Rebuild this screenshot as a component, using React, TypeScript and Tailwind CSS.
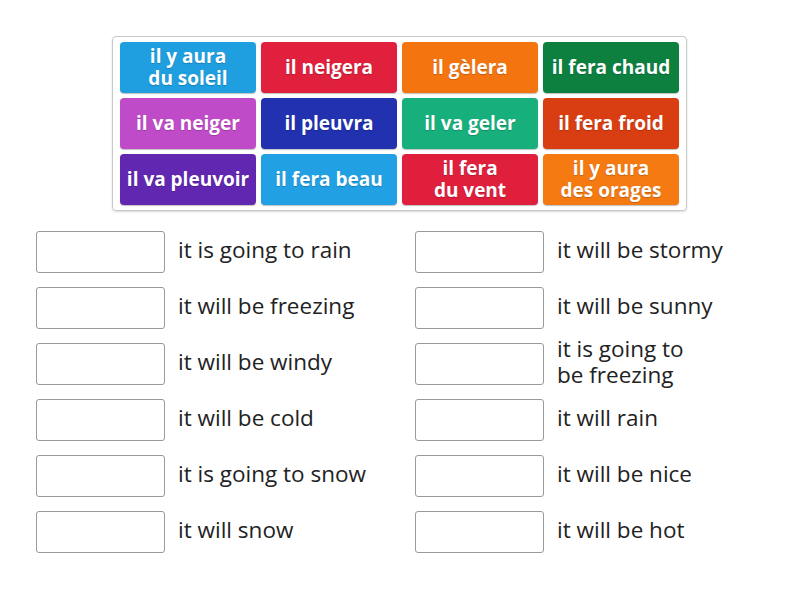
import React from "react";

type Tile = { lines: string[]; bg: string };

const tiles: Tile[] = [
  { lines: ["il y aura", "du soleil"], bg: "bg-[#1f9fe0]" },
  { lines: ["il neigera"], bg: "bg-[#e0203c]" },
  { lines: ["il gèlera"], bg: "bg-[#f47510]" },
  { lines: ["il fera chaud"], bg: "bg-[#0d8040]" },
  { lines: ["il va neiger"], bg: "bg-[#c04bc9]" },
  { lines: ["il pleuvra"], bg: "bg-[#2131b0]" },
  { lines: ["il va geler"], bg: "bg-[#17b07d]" },
  { lines: ["il fera froid"], bg: "bg-[#d93d12]" },
  { lines: ["il va pleuvoir"], bg: "bg-[#6127b1]" },
  { lines: ["il fera beau"], bg: "bg-[#21a0e3]" },
  { lines: ["il fera", "du vent"], bg: "bg-[#e01f3d]" },
  { lines: ["il y aura", "des orages"], bg: "bg-[#f57a12]" },
];

const left: string[][] = [
  ["it is going to rain"],
  ["it will be freezing"],
  ["it will be windy"],
  ["it will be cold"],
  ["it is going to snow"],
  ["it will snow"],
];

const right: string[][] = [
  ["it will be stormy"],
  ["it will be sunny"],
  ["it is going to", "be freezing"],
  ["it will rain"],
  ["it will be nice"],
  ["it will be hot"],
];

const Row = ({ lines }: { lines: string[] }) => (
  <div className="flex items-center h-[42px]">
    <div className="w-[129px] h-[42px] shrink-0 border border-[#9a9a9a] rounded-[3px] bg-white" />
    <div className="ml-[13px] pb-[5px] text-[22.5px] leading-[26px] text-[#222]">
      {lines.map((l, i) => (
        <div key={i} className="whitespace-nowrap">{l}</div>
      ))}
    </div>
  </div>
);

export default function App() {
  return (
    <div className="w-[800px] h-[600px] bg-white" style={{ fontFamily: '"Open Sans", sans-serif' }}>
      <div className="pt-[36px]">
        <div className="ml-[112px] w-[575px] border border-[#c8c8c8] rounded-[4px] pl-[7px] pr-[5px] pt-[5px] pb-[5px] shadow-[0_1px_2px_rgba(0,0,0,0.15)]">
          <div className="grid grid-cols-[repeat(4,136px)] gap-[5px]">
            {tiles.map((t, i) => (
              <div
                key={i}
                className={`${t.bg} h-[51px] rounded-[4px] flex flex-col items-center justify-center pb-[2px] text-white font-bold text-[19px] leading-[22px] shadow-[0_1px_1px_rgba(0,0,0,0.25)] [text-shadow:0_1px_1px_rgba(0,0,0,0.2)]`}
              >
                {t.lines.map((l, j) => (
                  <div key={j} className="whitespace-nowrap">{l}</div>
                ))}
              </div>
            ))}
          </div>
        </div>
      </div>
      <div className="flex mt-[20px] pl-[36px]">
        <div className="w-[379px] flex flex-col gap-[14px]">
          {left.map((l, i) => (
            <Row key={i} lines={l} />
          ))}
        </div>
        <div className="w-[379px] flex flex-col gap-[14px]">
          {right.map((l, i) => (
            <Row key={i} lines={l} />
          ))}
        </div>
      </div>
    </div>
  );
}
